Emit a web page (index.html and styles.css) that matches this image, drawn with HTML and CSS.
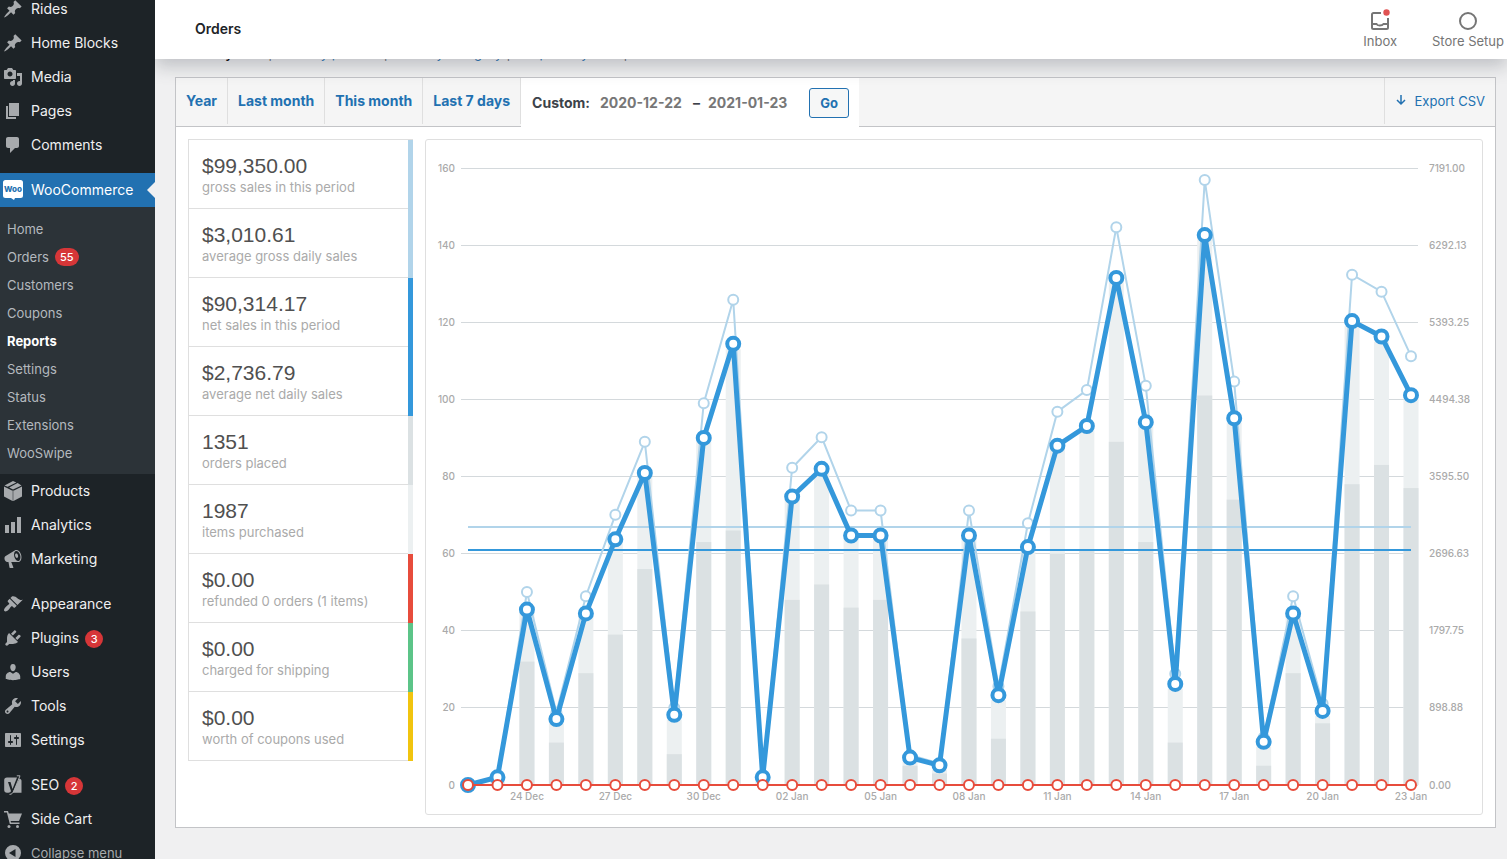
FILE: index.html
```html
<!DOCTYPE html>
<html lang="en">
<head>
<meta charset="utf-8">
<title>Orders – WooCommerce reports</title>
<link rel="stylesheet" href="styles.css">
</head>
<body>
<div class="app">
  <nav class="sidebar" aria-label="Main menu">
    <ul class="menu">
      <li><a class="menu-link" href="#"><svg class="icon" viewBox="0 0 20 20"><path d="M10.44 3.02l1.82-1.82 6.36 6.35-1.83 1.82c-1.05-.68-2.48-.57-3.41.36l-.75.75c-.92.93-1.04 2.35-.35 3.41l-1.83 1.82-2.41-2.41-2.8 2.79c-.42.42-3.38 2.71-3.8 2.29s1.86-3.39 2.28-3.81l2.79-2.79L4.1 9.36l1.83-1.82c1.05.69 2.48.57 3.4-.36l.75-.75c.93-.92 1.05-2.35.36-3.41z"/></svg>Rides</a></li>
      <li><a class="menu-link" href="#"><svg class="icon" viewBox="0 0 20 20"><path d="M10.44 3.02l1.82-1.82 6.36 6.35-1.83 1.82c-1.05-.68-2.48-.57-3.41.36l-.75.75c-.92.93-1.04 2.35-.35 3.41l-1.83 1.82-2.41-2.41-2.8 2.79c-.42.42-3.38 2.71-3.8 2.29s1.86-3.39 2.28-3.81l2.79-2.79L4.1 9.36l1.83-1.82c1.05.69 2.48.57 3.4-.36l.75-.75c.93-.92 1.05-2.35.36-3.41z"/></svg>Home Blocks</a></li>
      <li><a class="menu-link" href="#"><svg class="icon" viewBox="0 0 20 20"><path d="M13 11V4c0-.55-.45-1-1-1h-1.67L9 1H5L3.67 3H2c-.55 0-1 .45-1 1v7c0 .55.45 1 1 1h10c.55 0 1-.45 1-1zM7 4.5c1.38 0 2.5 1.12 2.5 2.5S8.38 9.5 7 9.5 4.5 8.38 4.5 7 5.62 4.5 7 4.5zM14 6h5v10.5c0 1.38-1.12 2.5-2.5 2.5S14 17.88 14 16.5s1.12-2.5 2.5-2.5c.17 0 .34.02.5.05V9h-3V6zm-4 8.05V13h2v3.5c0 1.38-1.12 2.5-2.5 2.5S7 17.88 7 16.5 8.12 14 9.5 14c.17 0 .34.02.5.05z"/></svg>Media</a></li>
      <li><a class="menu-link" href="#"><svg class="icon" viewBox="0 0 20 20"><path d="M6 15V2h10v13H6zm-1 1h8v2H3V5h2v11z"/></svg>Pages</a></li>
      <li><a class="menu-link" href="#"><svg class="icon" viewBox="0 0 20 20"><path d="M5 2h9c1.1 0 2 .9 2 2v7c0 1.1-.9 2-2 2h-2l-5 5v-5H5c-1.1 0-2-.9-2-2V4c0-1.1.9-2 2-2z"/></svg>Comments</a></li>
      <li class="gap"><a class="menu-link current" href="#"><svg class="icon woo" viewBox="0 0 20 20"><path d="M2.500 0h15a2.500 2.500 0 0 1 2.500 2.500v13a2.500 2.500 0 0 1-2.500 2.500H12l-1 2-3-2H2.500A2.500 2.500 0 0 1 0 15.500v-13A2.500 2.500 0 0 1 2.500 0z"/><text x="10" y="12" text-anchor="middle">Woo</text></svg>WooCommerce</a>
        <ul class="submenu">
          <li><a href="#">Home</a></li>
          <li><a href="#">Orders <span class="badge">55</span></a></li>
          <li><a href="#">Customers</a></li>
          <li><a href="#">Coupons</a></li>
          <li><a class="active" href="#" aria-current="page">Reports</a></li>
          <li><a href="#">Settings</a></li>
          <li><a href="#">Status</a></li>
          <li><a href="#">Extensions</a></li>
          <li><a href="#">WooSwipe</a></li>
        </ul>
      </li>
      <li><a class="menu-link" href="#"><svg class="icon" viewBox="0 0 20 20"><path d="M10 0l3.300 1.500-8.600 4.200L1.500 4.500zM14.600 2.100L18.500 4.500 10 8.600 6.100 6.500zM1 5.600l8.500 4.100V20L1 15.500zM19 5.600v9.900L10.500 20V9.700z"/><path d="M9.500 9.500h1V20h-1z"/></svg>Products</a></li>
      <li><a class="menu-link" href="#"><svg class="icon" viewBox="0 0 20 20"><path d="M18 18V2h-4v16h4zm-6 0V7H8v11h4zm-6 0v-8H2v8h4z"/></svg>Analytics</a></li>
      <li><a class="menu-link" href="#"><svg class="icon" viewBox="0 0 20 20"><path d="M18.150 5.940c.46 1.620.38 3.220-.02 4.480-.42 1.280-1.260 2.180-2.300 2.480-.16.060-.26.060-.4.060-.060.020-.12.020-.18.020-.060.020-.14.020-.22.020h-6.800l2.220 5.500c.020.14-.060.26-.14.34-.080.1-.24.160-.34.160H6.950c-.1 0-.26-.060-.34-.160-.080-.080-.160-.2-.14-.34l-1-5.500H4.250l-.02-.02c-.5.060-1.080-.18-1.540-.62s-.88-1.080-1.060-1.880c-.24-.8-.2-1.560-.02-2.200.18-.62.58-1.080 1.060-1.300l.02-.02 9-5.400c.1-.060.18-.1.24-.160.060-.040.14-.080.24-.12.160-.080.28-.12.5-.18 1.040-.3 2.240.1 3.220.98s1.840 2.240 2.260 3.860zm-2.580 5.980h-.02c.4-.1.740-.34 1.040-.7.58-.7.86-1.760.86-3.040 0-.64-.1-1.300-.28-1.980-.34-1.360-1.020-2.500-1.780-3.240s-1.680-1.100-2.460-.88c-.82.22-1.400.96-1.700 2-.32 1.040-.28 2.360.060 3.720.38 1.360 1 2.500 1.800 3.240.78.74 1.620 1.100 2.480.88zm-2.540-7.520c.22-.040.42-.020.62.040.38.160.76.480 1.020 1s.42 1.200.42 1.780c0 .3-.040.56-.12.8-.18.480-.44.840-.86.940-.34.1-.8-.060-1.140-.4s-.64-.86-.78-1.500c-.18-.62-.12-1.240.02-1.720s.480-.84.820-.94z"/></svg>Marketing</a></li>
      <li class="gap"><a class="menu-link" href="#"><svg class="icon" viewBox="0 0 20 20"><path d="M14.480 11.060L7.410 3.990l1.500-1.500c.5-.56 2.300-.47 3.510.32 1.210.8 1.430 1.280 2.910 2.100 1.180.64 2.450 1.260 4.450.85zm-.71.71L6.700 4.700 4.930 6.470c-.39.39-.39 1.020 0 1.410l1.060 1.060c.39.39.39 1.030 0 1.420-.6.6-1.430 1.110-2.210 1.690-.35.26-.7.53-1.010.84C1.430 14.230.4 16.080 1.400 17.070c.99 1 2.840-.03 4.180-1.360.31-.31.58-.66.85-1.020.57-.78 1.080-1.610 1.690-2.210.39-.39 1.020-.39 1.410 0l1.060 1.060c.39.39 1.020.39 1.410 0z"/></svg>Appearance</a></li>
      <li><a class="menu-link" href="#"><svg class="icon" viewBox="0 0 20 20"><path d="M13.110 4.360L9.870 7.600 8 5.730l3.240-3.240c.35-.34 1.050-.2 1.560.32.52.51.66 1.210.31 1.550zm-8 1.770l.91-1.120 9.010 9.010-1.190.84c-.71.71-2.630 1.160-3.820 1.160H6.140L4.900 17.260c-.59.59-1.540.59-2.120 0-.59-.58-.59-1.530 0-2.120l1.240-1.240v-3.880c0-1.130.4-3.190 1.090-3.890zm7.260 3.970l3.240-3.240c.34-.35 1.040-.21 1.550.31.52.51.66 1.210.31 1.550l-3.240 3.250z"/></svg>Plugins <span class="badge">3</span></a></li>
      <li><a class="menu-link" href="#"><svg class="icon" viewBox="0 0 20 20"><path d="M10 9.250c-2.270 0-2.730-3.440-2.730-3.440C7 4.020 7.820 2 9.970 2c2.160 0 2.980 2.020 2.710 3.810 0 0-.41 3.440-2.680 3.440zm0 2.570L12.720 10c2.390 0 4.520 2.330 4.520 4.530v2.490s-3.650 1.130-7.240 1.130c-3.650 0-7.240-1.130-7.240-1.130v-2.490c0-2.250 1.940-4.480 4.470-4.480z"/></svg>Users</a></li>
      <li><a class="menu-link" href="#"><svg class="icon" viewBox="0 0 20 20"><path d="M16.680 9.770c-1.340 1.340-3.300 1.670-4.950.99l-5.410 6.520c-.99.99-2.590.99-3.580 0s-.99-2.590 0-3.570l6.520-5.420c-.68-1.650-.35-3.610.99-4.950 1.280-1.280 3.120-1.620 4.720-1.060l-2.890 2.890 2.820 2.820 2.860-2.870c.53 1.580.18 3.390-1.080 4.650zM3.810 16.210c.4.39 1.040.39 1.430 0 .4-.4.4-1.040 0-1.430-.39-.4-1.030-.4-1.430 0-.39.39-.39 1.030 0 1.430z"/></svg>Tools</a></li>
      <li><a class="menu-link" href="#"><svg class="icon" viewBox="0 0 20 20"><path d="M18 16V4c0-.55-.45-1-1-1H3c-.55 0-1 .45-1 1v12c0 .55.45 1 1 1h14c.55 0 1-.45 1-1zM8 11h1c.55 0 1 .45 1 1s-.45 1-1 1H8v1.500c0 .28-.22.5-.5.5s-.5-.22-.5-.5V13H6c-.55 0-1-.45-1-1s.45-1 1-1h1V5.500c0-.28.22-.5.5-.5s.5.22.5.5V11zm5-2h-1c-.55 0-1-.45-1-1s.45-1 1-1h1V5.500c0-.28.22-.5.5-.5s.5.22.5.5V7h1c.55 0 1 .45 1 1s-.45 1-1 1h-1v5.500c0 .28-.22.5-.5.5s-.5-.22-.5-.5V9z"/></svg>Settings</a></li>
      <li class="gap"><a class="menu-link" href="#"><svg class="icon" viewBox="0 0 20 20"><path d="M4 2.500h10L9.500 14 7.500 7H5l3 9c-.4 1.100-1.100 1.700-2.500 1.700H4A2.800 2.800 0 0 1 1.200 15V5.300A2.800 2.800 0 0 1 4 2.500zM16.500 3.500c1.300.4 2 1.200 2 2.500v11.700H9.300c.7-.8 1.100-1.700 1.600-3z"/><path d="M13.800.8H17L10.800 16c-.9 2.300-2 3.300-4.300 3.400" fill="none" stroke="#a7aaad"/></svg>SEO <span class="badge">2</span></a></li>
      <li><a class="menu-link" href="#"><svg class="icon" viewBox="0 0 20 20"><path d="M1 2h4l.8 2.500H19L16 12H7.600l.5 1.500h8.400V15H6.800L3.900 3.500H1z"/><circle cx="6" cy="17.500" r="1.500"/><circle cx="14.500" cy="17.500" r="1.500"/></svg>Side Cart</a></li>
      <li><button class="menu-link collapse" type="button"><svg class="icon" viewBox="0 0 20 20"><path fill-rule="evenodd" d="M10 2a8 8 0 1 1 0 16 8 8 0 0 1 0-16zm2.500 4L6 10l6.500 4z"/></svg>Collapse menu</button></li>
    </ul>
  </nav>

  <div class="page">
    <header class="topbar">
      <h1 class="title">Orders</h1>
      <div class="actions">
        <button class="action" type="button">
          <svg class="action-icon" viewBox="0 0 24 24" fill="none" stroke="#757575" stroke-width="2"><path d="M13 4H5.500A1.500 1.500 0 0 0 4 5.500v13A1.500 1.500 0 0 0 5.500 20h13a1.500 1.500 0 0 0 1.500-1.500V9M4 15h4.500c.8 2 5.500 2 7 0H20"/><circle cx="18.500" cy="3.500" r="3.200" fill="#e05252" stroke="none"/></svg>
          Inbox
        </button>
        <button class="action" type="button">
          <svg class="action-icon" viewBox="0 0 24 24" fill="none" stroke="#757575" stroke-width="2"><circle cx="12" cy="12" r="8"/></svg>
          Store Setup
        </button>
      </div>
    </header>

    <main class="content">
      <ul class="reports">
        <li><a class="selected" href="#">Sales by date</a></li>
        <li><a href="#">Sales by product</a></li>
        <li><a href="#">Sales by category</a></li>
        <li><a href="#">Coupons by date</a></li>
        <li><a href="#">Customer downloads</a></li>
      </ul>

      <section class="panel">
        <div class="range">
          <a class="tab" href="#">Year</a>
          <a class="tab" href="#">Last month</a>
          <a class="tab" href="#">This month</a>
          <a class="tab" href="#">Last 7 days</a>
          <form class="custom">
            <label for="from">Custom:</label>
            <input class="date" id="from" type="text" value="2020-12-22">
            <span class="dash">–</span>
            <input class="date" id="to" type="text" value="2021-01-23" aria-label="End date">
            <button class="go" type="button">Go</button>
          </form>
          <a class="export" href="#"><svg class="arrow" viewBox="0 0 12 12"><path d="M6 0v9M2 5l4 4 4-4"/></svg>Export CSV</a>
        </div>
        <div class="report">
          <ul class="legend">
            <li class="gross"><strong>$99,350.00</strong>gross sales in this period</li>
            <li class="gross"><strong>$3,010.61</strong>average gross daily sales</li>
            <li class="net"><strong>$90,314.17</strong>net sales in this period</li>
            <li class="net"><strong>$2,736.79</strong>average net daily sales</li>
            <li class="orders"><strong>1351</strong>orders placed</li>
            <li class="items"><strong>1987</strong>items purchased</li>
            <li class="refunds"><strong>$0.00</strong>refunded 0 orders (1 items)</li>
            <li class="shipping"><strong>$0.00</strong>charged for shipping</li>
            <li class="coupons"><strong>$0.00</strong>worth of coupons used</li>
          </ul>
          <div class="chart-box">
            <svg class="chart" id="chart" viewBox="0 0 1056 674" role="img" aria-label="Sales by date"></svg>
          </div>
        </div>
      </section>
    </main>
  </div>
</div>
<script src="chart.js"></script>
</body>
</html>
```

FILE: styles.css
```css
* { box-sizing: border-box; }

body {
  margin: 0;
  background: #f0f0f1;
  color: #3c434a;
  font: 13px/18px Inter, "Liberation Sans", sans-serif;
  overflow: hidden;
}

ul { list-style: none; margin: 0; padding: 0; }
a { color: #2271b1; text-decoration: none; }
button { font: inherit; cursor: pointer; }

.app {
  display: grid;
  grid-template-columns: 155px minmax(0, 1fr);
  height: 100vh;
}

/* Sidebar */
.sidebar {
  position: relative;
  z-index: 3;
  background: #1d2327;
  height: 100vh;
}
.menu { margin-top: -8px; }
.gap { margin-top: 11px; }
.menu-link {
  display: flex;
  align-items: center;
  gap: 8px;
  width: 100%;
  height: 34px;
  padding: 0 0 0 3px;
  border: 0;
  background: none;
  color: #f0f0f1;
  font-size: 14px;
}
.icon { width: 20px; height: 20px; flex: none; fill: #a7aaad; }
.current { position: relative; background: #2271b1; color: #fff; }
.current::after {
  content: "";
  position: absolute;
  right: 0;
  top: 9px;
  border: 8px solid transparent;
  border-left: 0;
  border-right-color: #f0f0f1;
}
.woo { fill: #fff; }
.woo text { fill: #2271b1; font-size: 8px; font-weight: 800; }
.collapse { color: #a7aaad; font-size: 13px; }
.submenu { background: #2c3338; padding: 8px 0 7px; }
.submenu a {
  display: flex;
  align-items: center;
  gap: 6px;
  height: 28px;
  padding-left: 7px;
  color: #b4b9be;
}
.submenu .active { color: #fff; font-weight: 700; }
.badge {
  min-width: 18px;
  height: 18px;
  padding: 0 5px;
  border-radius: 9px;
  background: #d63638;
  color: #fff;
  font-size: 11px;
  font-weight: 500;
  text-align: center;
}
.menu-link .badge { margin: 1px 0 0 -2px; }

/* Top bar */
.page { min-width: 0; }
.topbar {
  position: relative;
  z-index: 2;
  display: flex;
  justify-content: space-between;
  align-items: center;
  height: 59px;
  padding: 0 3px 2px 40px;
  background: #fff;
  box-shadow: 0 8px 16px rgba(85, 93, 102, 0.3);
}
.title { margin: 0; font-size: 14px; font-weight: 600; color: #1d2327; }
.actions { display: flex; gap: 35px; }
.action {
  display: flex;
  flex-direction: column;
  align-items: center;
  padding: 0;
  border: 0;
  background: none;
  color: #757575;
  line-height: 16px;
  white-space: nowrap;
}
.action-icon { width: 24px; height: 24px; overflow: visible; }

/* Report */
.content { padding: 0 11px 0 20px; }
.reports {
  display: flex;
  height: 18px;
  margin-top: -15px;
  padding-left: 5px;
}
.reports li + li::before { content: "|"; padding: 0 4px; color: #646970; }
.reports .selected { color: #000; font-weight: 600; }

.panel { margin-top: 15px; border: 1px solid #c3c4c7; background: #fff; }
.range {
  display: flex;
  height: 49px;
  border-bottom: 1px solid #c3c4c7;
  background: #f5f5f5;
  font-size: 14px;
  font-weight: 700;
}
.tab {
  height: 46px;
  padding: 14px 10px;
  border-right: 1px solid #dfdfdf;
}
.custom {
  display: flex;
  align-items: center;
  height: 49px;
  padding: 0 10px 0 11px;
  background: #fff;
}
.date {
  width: 85px;
  padding: 0;
  border: 0;
  background: none;
  color: #777;
  font: inherit;
}
.custom label { margin-right: 10px; }
.dash { margin: 0 8px; }
.go {
  width: 40px;
  height: 30px;
  margin-left: 16px;
  padding: 0;
  border: 1px solid #2271b1;
  border-radius: 3px;
  background: #f6f7f7;
  color: #2271b1;
  font-size: 13px;
}
.export {
  display: flex;
  align-items: center;
  gap: 8px;
  height: 46px;
  margin-left: auto;
  padding: 0 10px;
  border-left: 1px solid #dfdfdf;
  font-size: 13px;
  font-weight: 400;
}
.arrow { width: 12px; height: 12px; fill: none; stroke: #2271b1; stroke-width: 1.5; }

.report {
  display: grid;
  grid-template-columns: 225px minmax(0, 1fr);
  align-items: start;
  gap: 12px;
  padding: 12px;
}
.legend { border-top: 1px solid #dfdfdf; }
.legend li {
  height: 69px;
  padding: 14px 13px 0;
  border-left: 1px solid #dfdfdf;
  border-right: 5px solid #b1d4ea;
  box-shadow: inset 0 -1px #dfdfdf;
  color: #aaa;
}
.legend strong {
  display: block;
  color: #505050;
  font-family: "Liberation Sans", Arial, sans-serif;
  font-size: 21px;
  font-weight: 400;
  line-height: 24px;
}
.legend .net { border-right-color: #3498db; }
.legend .orders { border-right-color: #dbe1e3; }
.legend .items { border-right-color: #ecf0f1; }
.legend .refunds { border-right-color: #e74c3c; }
.legend .shipping { border-right-color: #5cc488; }
.legend .coupons { border-right-color: #f1c40f; }

.chart-box { border: 1px solid #dfdfdf; border-radius: 3px; }
.chart { display: block; width: 100%; height: auto; }
.chart text { fill: #aaa; font-size: 10px; font-weight: 500; }
.chart .grid { stroke: #d4d9dc; }
.chart .bar-items { fill: #ecf0f1; }
.chart .bar-orders { fill: #dbe1e3; }
.chart .line-gross { fill: none; stroke: #b1d4ea; stroke-width: 2; }
.chart .line-net { fill: none; stroke: #3498db; stroke-width: 5; stroke-linejoin: round; }
.chart .average-net { stroke: #3498db; stroke-width: 2; }
.chart .line-refunds { fill: none; stroke: #e74c3c; stroke-width: 2; }
.chart circle { fill: #fff; stroke-width: 2; }
.chart .dot-gross { stroke: #b1d4ea; }
.chart .dot-net { stroke: #3498db; stroke-width: 4; }
.chart .dot-refunds { stroke: #e74c3c; }
```

FILE: chart.js
```js
const svg = document.getElementById("chart");
const NS = "http://www.w3.org/2000/svg";

const net = [0, 2, 45.5, 17.1, 44.5, 63.7, 80.9, 18.2, 90, 114.4, 2, 74.8, 82, 64.7, 64.7,
  7.1, 5.1, 64.7, 23.3, 61.7, 88, 93.1, 131.5, 94.1, 26.2, 142.6, 95.1, 11.2, 44.5, 19.2,
  120.3, 116.3, 101.1];
const orders = [0, 0, 32, 11, 29, 39, 56, 8, 63, 66, 0, 48, 52, 46, 48, 5, 3, 38, 12, 45,
  60, 61, 89, 63, 11, 101, 74, 5, 29, 16, 78, 83, 77];
const gross = net.map(v => v * 1.1);
const items = net.map(v => Math.max(0, Math.round(v) - 1));

const left = 42, right = 985, top0 = 28, bottom = 645;
const x = i => left + (right - left) * i / (net.length - 1);
const y = v => bottom - (bottom - top0) * v / 160;

function add(name, attrs, text) {
  const el = document.createElementNS(NS, name);
  for (const key in attrs) el.setAttribute(key, attrs[key]);
  if (text !== undefined) el.textContent = text;
  svg.appendChild(el);
}

const amounts = ["0.00", "898.88", "1797.75", "2696.63", "3595.50", "4494.38", "5393.25", "6292.13", "7191.00"];
amounts.forEach((amount, i) => {
  const row = Math.floor(y(i * 20));
  add("line", { class: "grid", x1: 35, x2: 992, y1: row + 0.5, y2: row + 0.5 });
  add("text", { x: 29, y: row + 4, "text-anchor": "end" }, i * 20);
  add("text", { x: 1003, y: row + 4 }, amount);
});

function bars(values, cls) {
  values.forEach((v, i) => {
    if (v) add("rect", { class: cls, x: x(i) - 7.5, y: y(v), width: 15, height: bottom - y(v) });
  });
}
function series(values, name, radius) {
  add("polyline", { class: "line-" + name, points: values.map((v, i) => x(i) + "," + y(v)).join(" ") });
  values.forEach((v, i) => add("circle", { class: "dot-" + name, cx: x(i), cy: y(v), r: radius }));
}

bars(items, "bar-items");
bars(orders, "bar-orders");
add("line", { class: "line-gross", x1: left, x2: right, y1: 387, y2: 387 });
add("line", { class: "average-net", x1: left, x2: right, y1: 410, y2: 410 });
series(gross, "gross", 5);
series(net, "net", 6);
series(net.map(() => 0), "refunds", 5);

const labels = ["24 Dec", "27 Dec", "30 Dec", "02 Jan", "05 Jan", "08 Jan", "11 Jan", "14 Jan", "17 Jan", "20 Jan", "23 Jan"];
labels.forEach((label, i) => {
  add("text", { x: x(2 + i * 3), y: 660, "text-anchor": "middle" }, label);
});
```
